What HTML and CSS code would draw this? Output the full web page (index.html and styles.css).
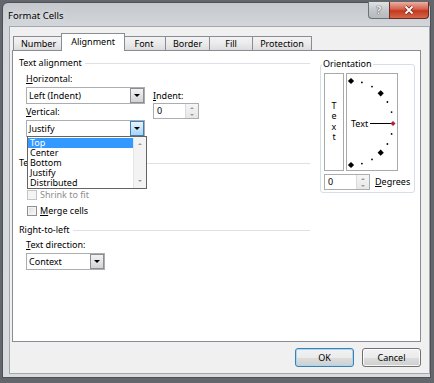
FILE: index.html
```html
<!doctype html>
<html lang="en">
    <head>
        <meta charset="UTF-8" />
        <title>Format Cells</title>
        <link rel="stylesheet" href="styles.css">
    </head>
    <body>
        <div class="window">
            <div class="titlebar">
                <span class="title">Format Cells</span>
                <div class="caption-buttons">
                    <div class="caption-btn help">?</div>
                    <div class="caption-btn close">
                        <svg width="12" height="10" viewBox="0 0 12 10">
                            <path d="M2.5 1.5 L9.5 8.5 M9.5 1.5 L2.5 8.5" stroke="#7a2a1c" stroke-width="3.4" />
                            <path d="M2.5 1.5 L9.5 8.5 M9.5 1.5 L2.5 8.5" stroke="#fff" stroke-width="1.8" />
                        </svg>
                    </div>
                </div>
            </div>

            <div class="client">
                <div class="tabs">
                    <div class="tab">Number</div>
                    <div class="tab active">Alignment</div>
                    <div class="tab">Font</div>
                    <div class="tab">Border</div>
                    <div class="tab">Fill</div>
                    <div class="tab">Protection</div>
                </div>

                <div class="panel">
                    <div class="col-left">
                        <div class="group-head"><span>Text alignment</span></div>
                        <div class="align-grid">
                            <div class="align-main">
                                <div class="label"><u>H</u>orizontal:</div>
                                <div class="combo">
                                    <span class="combo-value">Left (Indent)</span>
                                    <span class="combo-btn"></span>
                                </div>
                                <div class="label"><u>V</u>ertical:</div>
                                <div class="combo open">
                                    <span class="combo-value">Justify</span>
                                    <span class="combo-btn"></span>
                                    <div class="dropdown">
                                        <div class="options">
                                            <div class="option selected">Top</div>
                                            <div class="option">Center</div>
                                            <div class="option">Bottom</div>
                                            <div class="option">Justify</div>
                                            <div class="option">Distributed</div>
                                        </div>
                                        <div class="list-scroll">
                                            <span class="arrow up"></span>
                                            <span class="arrow down"></span>
                                        </div>
                                    </div>
                                </div>
                            </div>
                            <div class="indent">
                                <div class="label"><u>I</u>ndent:</div>
                                <div class="spin">
                                    <span class="spin-value">0</span>
                                    <span class="spin-btns"><span class="arrow up"></span><span class="arrow down"></span></span>
                                </div>
                            </div>
                        </div>

                        <div class="group-head gap-control"><span>Text control</span></div>
                        <div class="checks">
                            <div class="check"><span class="box"></span><span>Wrap text</span></div>
                            <div class="check disabled"><span class="box"></span><span>Shrink to fit</span></div>
                            <div class="check"><span class="box"></span><span><u>M</u>erge cells</span></div>
                        </div>

                        <div class="group-head gap-rtl"><span>Right-to-left</span></div>
                        <div class="direction">
                            <div class="label"><u>T</u>ext direction:</div>
                            <div class="combo short">
                                <span class="combo-value">Context</span>
                                <span class="combo-btn"></span>
                            </div>
                        </div>
                    </div>

                    <fieldset class="orientation">
                        <legend>Orientation</legend>
                        <div class="orient-row">
                            <div class="vertical-text">
                                <span>T</span><span>e</span><span>x</span><span>t</span>
                            </div>
                            <div class="dial">
                                <svg width="50" height="96" viewBox="0 0 50 96">
                                    <g fill="#000">
                                        <circle cx="14.9" cy="8.4" r="0.9" />
                                        <circle cx="25" cy="12.6" r="0.9" />
                                        <circle cx="40.4" cy="28" r="0.9" />
                                        <circle cx="44.6" cy="38.1" r="0.9" />
                                        <circle cx="44.6" cy="59.9" r="0.9" />
                                        <circle cx="40.4" cy="70" r="0.9" />
                                        <circle cx="25" cy="85.4" r="0.9" />
                                        <circle cx="14.9" cy="89.6" r="0.9" />
                                        <rect x="1.8" y="4.8" width="4.4" height="4.4" transform="rotate(45 4 7)" />
                                        <rect x="31.5" y="17.1" width="4.4" height="4.4" transform="rotate(45 33.7 19.3)" />
                                        <rect x="31.5" y="76.5" width="4.4" height="4.4" transform="rotate(45 33.7 78.7)" />
                                        <rect x="1.8" y="88.8" width="4.4" height="4.4" transform="rotate(45 4 91)" />
                                    </g>
                                    <text x="4" y="52.5" font-family="Segoe UI, Noto Sans, sans-serif" font-size="9">Text</text>
                                    <line x1="23" y1="49.5" x2="44" y2="49.5" stroke="#000" stroke-width="1" />
                                    <rect x="44.2" y="47.7" width="3.6" height="3.6" fill="#b01e3a" transform="rotate(45 46 49.5)" />
                                </svg>
                            </div>
                        </div>
                        <div class="degrees-row">
                            <div class="spin narrow">
                                <span class="spin-value">0</span>
                                <span class="spin-btns"><span class="arrow up"></span><span class="arrow down"></span></span>
                            </div>
                            <span class="label"><u>D</u>egrees</span>
                        </div>
                    </fieldset>
                </div>

                <div class="buttons">
                    <div class="btn default">OK</div>
                    <div class="btn">Cancel</div>
                </div>
            </div>
        </div>
    </body>
</html>
```

FILE: styles.css
```css
* {
    margin: 0;
    padding: 0;
    box-sizing: border-box;
}

body {
    width: 434px;
    height: 383px;
    overflow: hidden;
    background: #63676c;
    font-family: "Segoe UI", "Noto Sans", sans-serif;
    font-size: 9px;
    line-height: 12px;
    color: #000;
}

.window {
    margin: 2px 0 0 2px;
    width: 429px;
    height: 376px;
    border: 1px solid #4d5157;
    border-radius: 6px 6px 0 0;
    background: linear-gradient(#c4c8cd, #d3d6da 24px, #d9dcdf);
    padding: 0 1px 4px 0;
    display: flex;
    flex-direction: column;
}

/* Title bar */
.titlebar {
    height: 24px;
    display: flex;
    justify-content: space-between;
    align-items: flex-start;
    padding-left: 5px;
}

.title {
    margin-top: 7px;
    font-size: 9.5px;
    text-shadow: 0 0 6px rgba(255, 255, 255, 0.9);
}

.caption-buttons {
    display: flex;
    margin-top: -1px;
}

.caption-btn {
    height: 17px;
    display: flex;
    align-items: center;
    justify-content: center;
    border: 1px solid #6c7077;
    border-top: none;
}

.caption-btn.help {
    width: 21px;
    border-radius: 0 0 0 4px;
    border-right: none;
    background: linear-gradient(#dfe2e5, #c3c7cc 50%, #b5babf);
    color: #f4f4f4;
    font-weight: bold;
    font-size: 10px;
    text-shadow: 0 0 1px #44484d, 0 0 1px #44484d;
}

.caption-btn.close {
    width: 40px;
    border-radius: 0 0 4px 0;
    border-color: #6e2b20;
    background: linear-gradient(#eab0a2, #d5604b 45%, #c2391f 55%, #d5674a);
}

/* Client area */
.client {
    flex: 1;
    margin-left: 7px;
    background: #f0f0f0;
    box-shadow: 0 0 0 1px #a4a8ad;
    padding: 6px 8px 0 2px;
    display: flex;
    flex-direction: column;
}

.tabs {
    display: flex;
    align-items: flex-end;
    height: 17px;
    padding-left: 1px;
    position: relative;
    z-index: 2;
}

.tab {
    height: 14px;
    min-width: 44px;
    padding: 0 7px;
    text-align: center;
    line-height: 13px;
    border: 1px solid #898c95;
    border-bottom: none;
    background: linear-gradient(#f3f3f3, #ebebeb 50%, #dcdcdc);
    margin-left: -1px;
}

.tab:first-child {
    margin-left: 0;
}

.tab.active {
    height: 18px;
    margin: 0 -2px -1px -3px;
    padding: 0 9px;
    line-height: 15px;
    background: #fff;
    position: relative;
    z-index: 1;
}

.panel {
    height: 292px;
    background: #fff;
    border: 1px solid #898c95;
    padding: 6px 0 0 6px;
    display: grid;
    grid-template-columns: 291px 95px;
    column-gap: 10px;
    align-items: start;
}

/* Left column */
.group-head {
    display: flex;
    align-items: center;
    gap: 3px;
    height: 12px;
}

.group-head::after {
    content: "";
    flex: 1;
    border-top: 1px solid #dde0e4;
}

.gap-control {
    margin-top: 20px;
}

.gap-rtl {
    margin-top: 5px;
}

.label {
    height: 12px;
    white-space: nowrap;
}

.align-grid {
    margin-top: 4px;
    padding-left: 7px;
    display: grid;
    grid-template-columns: 119px auto;
    column-gap: 8px;
    align-items: start;
}

.align-main .combo {
    margin: 2px 0;
}

.align-main .combo.open {
    margin-bottom: 0;
}

.indent {
    padding-top: 17px;
}

.combo {
    position: relative;
    width: 119px;
    height: 17px;
    border: 1px solid #abadb3;
    background: #fff;
    display: flex;
    align-items: center;
    justify-content: space-between;
}

.combo.short {
    width: 79px;
}

.combo-value {
    padding-left: 2px;
}

.combo-btn {
    width: 14px;
    height: 15px;
    border: 1px solid #8b8d92;
    background: linear-gradient(#f2f2f2, #e4e4e4 50%, #d2d2d2);
    display: flex;
    align-items: center;
    justify-content: center;
}

.combo-btn::after {
    content: "";
    border-left: 3px solid transparent;
    border-right: 3px solid transparent;
    border-top: 3px solid #000;
}

.combo.open .combo-btn {
    border-color: #3c7fb1;
    background: linear-gradient(#e6f3fc, #c6e3f8 50%, #a9d4f5);
}

.dropdown {
    position: absolute;
    top: 100%;
    left: 0;
    width: 120px;
    height: 53px;
    border: 1px solid #646464;
    background: #fff;
    display: flex;
    z-index: 5;
    padding-top: 1px;
}

.options {
    flex: 1;
}

.option {
    height: 10px;
    line-height: 10px;
    padding-left: 2px;
}

.option.selected {
    background: #3399ff;
    color: #fff;
}

.list-scroll {
    width: 13px;
    margin-top: -1px;
    background: #f3f3f3;
    border-left: 1px solid #e4e4e4;
    display: flex;
    flex-direction: column;
    justify-content: space-between;
    align-items: center;
    padding: 6px 0;
}

.arrow {
    width: 0;
    height: 0;
    border-left: 2px solid transparent;
    border-right: 2px solid transparent;
}

.arrow.up {
    border-bottom: 2px solid #9a9a9a;
}

.arrow.down {
    border-top: 2px solid #9a9a9a;
}

.spin {
    margin-top: 1px;
    width: 46px;
    height: 16px;
    border: 1px solid #abadb3;
    background: #fff;
    display: flex;
    justify-content: space-between;
}

.spin-value {
    padding-left: 3px;
    line-height: 14px;
}

.spin-btns {
    width: 13px;
    border-left: 1px solid #d9dadd;
    background: linear-gradient(#f6f6f6, #e6e6e6);
    display: flex;
    flex-direction: column;
    justify-content: space-around;
    align-items: center;
}

.checks {
    margin-top: 2px;
}

.check {
    height: 16px;
    display: flex;
    align-items: center;
    padding-left: 8px;
    gap: 3px;
}

.box {
    width: 10px;
    height: 10px;
    border: 1px solid #8e8f8f;
    background: linear-gradient(135deg, #dcdcdc, #fbfbfb);
    box-shadow: inset 0 0 0 1px #f4f4f4;
}

.check.disabled {
    color: #8d8d8d;
}

.check.disabled .box {
    border-color: #c4c4c4;
    background: #f4f4f4;
}

.direction {
    margin-top: 3px;
    padding-left: 7px;
}

.direction .combo {
    margin-top: 2px;
}

/* Orientation */
.orientation {
    margin-top: 1px;
    border: 1px solid #d5dfe5;
    border-radius: 3px;
    padding: 3px 0 2px 3px;
}

.orientation legend {
    margin-left: -2px;
    padding: 0 1px;
    line-height: 12px;
}

.orient-row {
    display: flex;
    gap: 2px;
}

.vertical-text {
    width: 20px;
    height: 98px;
    border: 1px solid #a9a9a9;
    display: flex;
    flex-direction: column;
    align-items: center;
    justify-content: center;
    line-height: 10.5px;
    padding-bottom: 1px;
}

.dial {
    width: 52px;
    height: 98px;
    border: 1px solid #a9a9a9;
}

.dial svg {
    display: block;
}

.degrees-row {
    margin-top: 3px;
    display: flex;
    align-items: center;
    gap: 5px;
}

.degrees-row .spin {
    margin-top: 0;
}

/* Dialog buttons */
.buttons {
    margin-top: 6px;
    display: flex;
    justify-content: flex-end;
    gap: 8px;
}

.btn {
    width: 59px;
    height: 19px;
    line-height: 17px;
    text-align: center;
    border: 1px solid #707070;
    border-radius: 3px;
    background: linear-gradient(#f2f2f2, #ebebeb 50%, #dddddd 51%, #cfcfcf);
    box-shadow: inset 0 0 0 1px rgba(255, 255, 255, 0.8);
}

.btn.default {
    border-color: #3c7fb1;
    box-shadow: inset 0 0 0 1px #a6d8f6;
}
```
